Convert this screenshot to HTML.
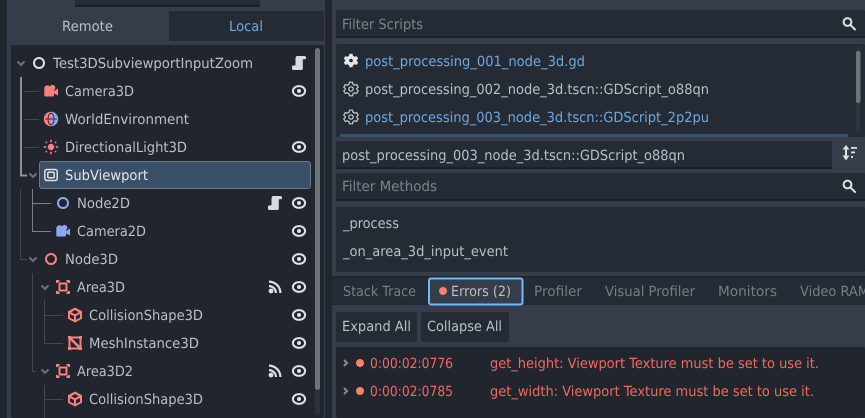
<!DOCTYPE html>
<html><head><meta charset="utf-8"><style>
html,body{margin:0;padding:0;background:#21262e;width:865px;height:418px;overflow:hidden}
svg{display:block}
text{font-family:"DejaVu Sans","Liberation Sans",sans-serif;font-size:14px;fill:#bcbfc4}
.ph{fill:#7f8388}.bl{fill:#70a8dc}.dim{fill:#787c82}.er{fill:#f4675e}.w{fill:#e4e6e8}
.l{stroke:#43474e;stroke-width:1;fill:none}.ll{stroke:#7c7f85;stroke-width:1;fill:none}
</style></head><body>
<svg width="865" height="418" viewBox="0 0 865 418" xmlns="http://www.w3.org/2000/svg" text-rendering="geometricPrecision">
<defs>
<g id="eye"><ellipse cx="0" cy="0" rx="6.100" ry="4.900" fill="none" stroke="#dfe0e2" stroke-width="2"/><circle r="2" fill="#dfe0e2"/></g>
<g id="scr"><path d="M-2.500-7H5.500Q7-7 7-5.200V-4L3.800-3.600V5.500Q3.800 7 2.300 7H-5.500Q-7 7-7 5.500V2.800L-3.500 2.300V-4.500Q-3.500-6-2.500-7Z" fill="#d9dadc"/></g>
<path id="chev" d="M-3.500-1.500L0 2L3.500-1.500" fill="none" stroke="#6f7379" stroke-width="2"/>
<g id="area" fill="none" stroke="#fc7f7f" stroke-width="2"><rect x="-3.500" y="-3.500" width="7" height="7"/><path d="M-6-4V-6H-3.500M3.500-6H6V-4M6 4V6H3.500M-3.500 6H-6V4"/></g>
<g id="coll"><path d="M0-7.500L7-3.800V3.800L0 7.500L-7 3.800V-3.800Z" fill="#fc7f7f"/><path d="M-3.800-2.800L0-.8L3.800-2.800L0-5ZM-5-1V2.800L-1 4.800V1ZM5-1V2.800L1 4.800V1Z" fill="#21262e"/></g>
<g id="gearo" fill="none" stroke="#c8cacc" stroke-width="1.200"><path d="M-1.500-6.800H1.500L2-4.800L3.700-3.800L5.700-4.400L7.200-1.900L5.800-.5V.5L7.200 1.900L5.700 4.400L3.700 3.800L2 4.800L1.500 6.800H-1.500L-2 4.800L-3.700 3.800L-5.700 4.400L-7.200 1.900L-5.800.5V-.5L-7.200-1.900L-5.700-4.400L-3.700-3.800L-2-4.800Z"/><circle r="2.200"/></g>
<g id="srch" fill="none" stroke="#dfe0e2" stroke-width="2"><circle cx="-1.500" cy="-1.500" r="3.900"/><path d="M1.300 1.300L6 6" stroke-linecap="round"/></g>
<g id="sig" fill="#dfe0e2"><circle cx="-4" cy="4" r="2.400"/><path d="M-6-2A8 8 0 0 1 2 6H-.2A5.800 5.800 0 0 0-6 .2ZM-6-6.500A12.500 12.500 0 0 1 6.500 6H4.300A10.300 10.300 0 0 0-6-4.300Z"/></g>
<g id="cam"><circle cx="-3" cy="-2.500" r="3.200"/><circle cx="2" cy="-3.300" r="2.800"/><rect x="-6.200" y="-2.500" width="9.700" height="8" rx="1"/><path d="M3.500 0L7.500-2.500V4.500L3.500 2.500Z"/></g>
</defs>

<rect width="865" height="418" fill="#21262e"/>
<!-- left panel -->
<rect x="7" y="0" width="318" height="418" fill="#363d4a"/>
<rect x="75" y="0" width="185" height="7" fill="#252b34"/><rect x="75" y="5" width="185" height="2" fill="#1c2027"/>
<rect x="169" y="11" width="155" height="30" rx="2" fill="#252b34"/>
<text x="62" y="31" textLength="51" lengthAdjust="spacingAndGlyphs">Remote</text>
<text x="229" y="31" textLength="34" lengthAdjust="spacingAndGlyphs" class="bl">Local</text>
<rect x="11" y="45" width="313" height="373" rx="2" fill="#21262e"/>
<rect x="315" y="48" width="5" height="367" rx="2.500" fill="#2c313a"/>
<rect x="315" y="48" width="5" height="342" rx="2.500" fill="#6f7378"/>

<!-- tree lines -->
<path d="M21 77V175.500H27" fill="none" stroke="#8c8f93" stroke-width="2"/>
<path class="l" d="M24 91.500H39M24 119.500H39M24 147.500H39M20.500 189V259.500H27M32.500 273V371.500H36M44.500 299V343.500H63M44.500 315.500H63M44.500 385V418M44.500 399.500H63"/>
<path class="ll" d="M32.500 189V231.500H51M32.500 203.500H51"/>

<!-- selection -->
<rect x="39.500" y="161.500" width="271" height="27" rx="2.500" fill="#3a5068" stroke="#6a7888"/>

<!-- chevrons -->
<use href="#chev" x="21" y="63"/><use href="#chev" x="33" y="175"/><use href="#chev" x="33" y="259"/><use href="#chev" x="45" y="287"/><use href="#chev" x="45" y="371"/>

<!-- node icons -->
<circle cx="39" cy="63" r="5" fill="none" stroke="#e0e0e0" stroke-width="2"/>
<use href="#cam" x="50.500" y="91" fill="#fc7f7f"/>
<g transform="translate(51 119)"><path d="M0-7.200A7.200 7.200 0 0 0 0 7.200Z" fill="#fc7f7f"/><path d="M0-7.200A7.200 7.200 0 0 1 0 7.200Z" fill="#8da5f3"/><g fill="none" stroke="#21262e" stroke-width=".9"><ellipse rx="3" ry="5.800"/><path d="M-5.800 0H5.800"/></g></g>
<g transform="translate(51 147)" fill="#fc7f7f"><circle r="3.200"/><rect x="-.8" y="-7.200" width="1.600" height="2.400"/><rect x="-.8" y="4.800" width="1.600" height="2.400"/><rect x="-7.200" y="-.8" width="2.400" height="1.600"/><rect x="4.800" y="-.8" width="2.400" height="1.600"/><rect x="-5.400" y="-5.400" width="1.600" height="1.600"/><rect x="3.800" y="-5.400" width="1.600" height="1.600"/><rect x="-5.400" y="3.800" width="1.600" height="1.600"/><rect x="3.800" y="3.800" width="1.600" height="1.600"/></g>
<g transform="translate(51 175)" fill="none" stroke="#e0e0e0" stroke-width="1.500"><rect x="-6.200" y="-5.500" width="12.400" height="11" rx="2"/><rect x="-3.200" y="-2.800" width="6.400" height="5.600" rx="1"/></g>
<circle cx="63" cy="203" r="5" fill="none" stroke="#8da5f3" stroke-width="2"/>
<use href="#cam" x="62.500" y="231" fill="#8da5f3"/>
<circle cx="51" cy="259" r="5" fill="none" stroke="#fc7f7f" stroke-width="2"/>
<use href="#area" x="63" y="287"/><use href="#area" x="63" y="371"/>
<use href="#coll" x="75" y="315"/><use href="#coll" x="75" y="399"/>
<g transform="translate(75 343)" fill="none" stroke="#fc7f7f"><rect x="-5.500" y="-5.500" width="11" height="11" stroke-width="2"/><path d="M-5-5L5 5" stroke-width="2.500"/><path d="M-7-7h3v3h-3zM4-7h3v3h-3zM-7 4h3v3h-3zM4 4h3v3h-3z" fill="#fc7f7f" stroke="none"/></g>

<!-- right icons -->
<use href="#scr" x="299" y="63"/><use href="#scr" x="275" y="203"/>
<use href="#eye" x="299" y="91"/><use href="#eye" x="299" y="147"/><use href="#eye" x="299" y="203"/><use href="#eye" x="299" y="231"/><use href="#eye" x="299" y="259"/><use href="#eye" x="299" y="287"/><use href="#eye" x="299" y="315"/><use href="#eye" x="299" y="343"/><use href="#eye" x="299" y="371"/><use href="#eye" x="299" y="399"/>
<use href="#sig" x="275" y="287"/><use href="#sig" x="275" y="371"/>

<!-- tree text -->
<text x="53" y="68" textLength="200" lengthAdjust="spacingAndGlyphs">Test3DSubviewportInputZoom</text>
<text x="65" y="96" textLength="69" lengthAdjust="spacingAndGlyphs">Camera3D</text>
<text x="65" y="124" textLength="124" lengthAdjust="spacingAndGlyphs">WorldEnvironment</text>
<text x="65" y="152" textLength="122" lengthAdjust="spacingAndGlyphs">DirectionalLight3D</text>
<text x="65" y="180" textLength="83" lengthAdjust="spacingAndGlyphs" class="w">SubViewport</text>
<text x="77" y="208" textLength="53" lengthAdjust="spacingAndGlyphs">Node2D</text>
<text x="77" y="236" textLength="69" lengthAdjust="spacingAndGlyphs">Camera2D</text>
<text x="65" y="264" textLength="53" lengthAdjust="spacingAndGlyphs">Node3D</text>
<text x="77" y="292" textLength="48" lengthAdjust="spacingAndGlyphs">Area3D</text>
<text x="89" y="320" textLength="114" lengthAdjust="spacingAndGlyphs">CollisionShape3D</text>
<text x="89" y="348" textLength="110" lengthAdjust="spacingAndGlyphs">MeshInstance3D</text>
<text x="77" y="376" textLength="56" lengthAdjust="spacingAndGlyphs">Area3D2</text>
<text x="89" y="404" textLength="114" lengthAdjust="spacingAndGlyphs">CollisionShape3D</text>

<!-- right top panel -->
<rect x="332" y="0" width="533" height="276" fill="#363d4a"/>
<rect x="336" y="10" width="529" height="28" rx="2" fill="#252b34"/><rect x="336" y="36" width="529" height="2" fill="#1c2027"/>
<text x="342" y="29" textLength="81" lengthAdjust="spacingAndGlyphs" class="ph">Filter Scripts</text>
<use href="#srch" x="849" y="23.500"/>
<rect x="336" y="44" width="529" height="93" rx="2" fill="#252b34"/>
<rect x="340" y="134" width="508" height="3" fill="#3a5068"/>
<rect x="856" y="48" width="4" height="84" rx="2" fill="#2f343d"/><rect x="856" y="51" width="4.500" height="52" rx="2" fill="#6f7378"/>
<g transform="translate(351 60.500)"><path d="M-1.500-6.800H1.500L2-4.800L3.700-3.800L5.700-4.400L7.200-1.900L5.800-.5V.5L7.200 1.900L5.700 4.400L3.700 3.800L2 4.800L1.500 6.800H-1.500L-2 4.800L-3.700 3.800L-5.700 4.400L-7.200 1.900L-5.800.5V-.5L-7.200-1.900L-5.700-4.400L-3.700-3.800L-2-4.800Z" fill="#e4e6e8"/><circle r="1.800" fill="#252b34"/></g>
<use href="#gearo" x="351" y="89"/><use href="#gearo" x="351" y="117"/>
<text x="365" y="66" textLength="220" lengthAdjust="spacingAndGlyphs" class="bl">post_processing_001_node_3d.gd</text>
<text x="365" y="94" textLength="344" lengthAdjust="spacingAndGlyphs">post_processing_002_node_3d.tscn::GDScript_o88qn</text>
<text x="365" y="122" textLength="344" lengthAdjust="spacingAndGlyphs" class="bl">post_processing_003_node_3d.tscn::GDScript_2p2pu</text>

<rect x="336" y="141" width="496" height="28" rx="2" fill="#252b34"/><rect x="336" y="167" width="496" height="2" fill="#1c2027"/>
<text x="342" y="160" textLength="343" lengthAdjust="spacingAndGlyphs">post_processing_003_node_3d.tscn::GDScript_o88qn</text>
<g fill="#dfe0e2"><rect x="845" y="149" width="2" height="7"/><path d="M842.500 149.500L846 145L849.500 149.500ZM842.500 155.500L846 160.500L849.500 155.500Z"/><rect x="851" y="147" width="6" height="1.800"/><rect x="851" y="151.500" width="4" height="1.800"/><rect x="851" y="156" width="2" height="1.800"/></g>

<rect x="336" y="173" width="529" height="28" rx="2" fill="#252b34"/><rect x="336" y="199" width="529" height="2" fill="#1c2027"/>
<text x="342" y="191" textLength="95" lengthAdjust="spacingAndGlyphs" class="ph">Filter Methods</text>
<use href="#srch" x="849" y="186"/>
<rect x="336" y="207" width="529" height="65" rx="2" fill="#252b34"/>
<text x="343" y="228" textLength="56" lengthAdjust="spacingAndGlyphs">_process</text>
<text x="343" y="256" textLength="165" lengthAdjust="spacingAndGlyphs">_on_area_3d_input_event</text>

<!-- bottom tabs -->
<rect x="332" y="278" width="533" height="27" fill="#252b34"/>
<rect x="332" y="305" width="533" height="113" fill="#363d4a"/>
<rect x="429" y="278.500" width="93.500" height="26" rx="2" fill="#363d4a" stroke="#70bafa" stroke-width="2"/>
<circle cx="443" cy="291" r="4" fill="#ff7f6e"/>
<text x="343" y="296" textLength="73" lengthAdjust="spacingAndGlyphs" class="dim">Stack Trace</text>
<text x="451" y="296" textLength="60" lengthAdjust="spacingAndGlyphs">Errors (2)</text>
<text x="534" y="296" textLength="48" lengthAdjust="spacingAndGlyphs" class="dim">Profiler</text>
<text x="605" y="296" textLength="90" lengthAdjust="spacingAndGlyphs" class="dim">Visual Profiler</text>
<text x="718" y="296" textLength="59" lengthAdjust="spacingAndGlyphs" class="dim">Monitors</text>
<text x="800" y="296" textLength="69" lengthAdjust="spacingAndGlyphs" class="dim">Video RAM</text>
<rect x="336" y="312" width="81" height="30" rx="2" fill="#252b34"/>
<rect x="421" y="312" width="88" height="30" rx="2" fill="#252b34"/>
<text x="342" y="331" textLength="69" lengthAdjust="spacingAndGlyphs">Expand All</text>
<text x="427" y="331" textLength="75" lengthAdjust="spacingAndGlyphs">Collapse All</text>
<rect x="336" y="347" width="529" height="71" rx="2" fill="#21262e"/>
<path d="M344 360L347 363L344 366M344 388L347 391L344 394" fill="none" stroke="#8a8d92" stroke-width="2"/>
<circle cx="360" cy="363" r="4" fill="#ff7f6e"/><circle cx="360" cy="391" r="4" fill="#ff7f6e"/>
<text x="370" y="368" textLength="83" lengthAdjust="spacingAndGlyphs" class="er">0:00:02:0776</text>
<text x="490" y="368" textLength="329" lengthAdjust="spacingAndGlyphs" class="er">get_height: Viewport Texture must be set to use it.</text>
<text x="370" y="396" textLength="83" lengthAdjust="spacingAndGlyphs" class="er">0:00:02:0785</text>
<text x="490" y="396" textLength="324" lengthAdjust="spacingAndGlyphs" class="er">get_width: Viewport Texture must be set to use it.</text>
</svg>
</body></html>
